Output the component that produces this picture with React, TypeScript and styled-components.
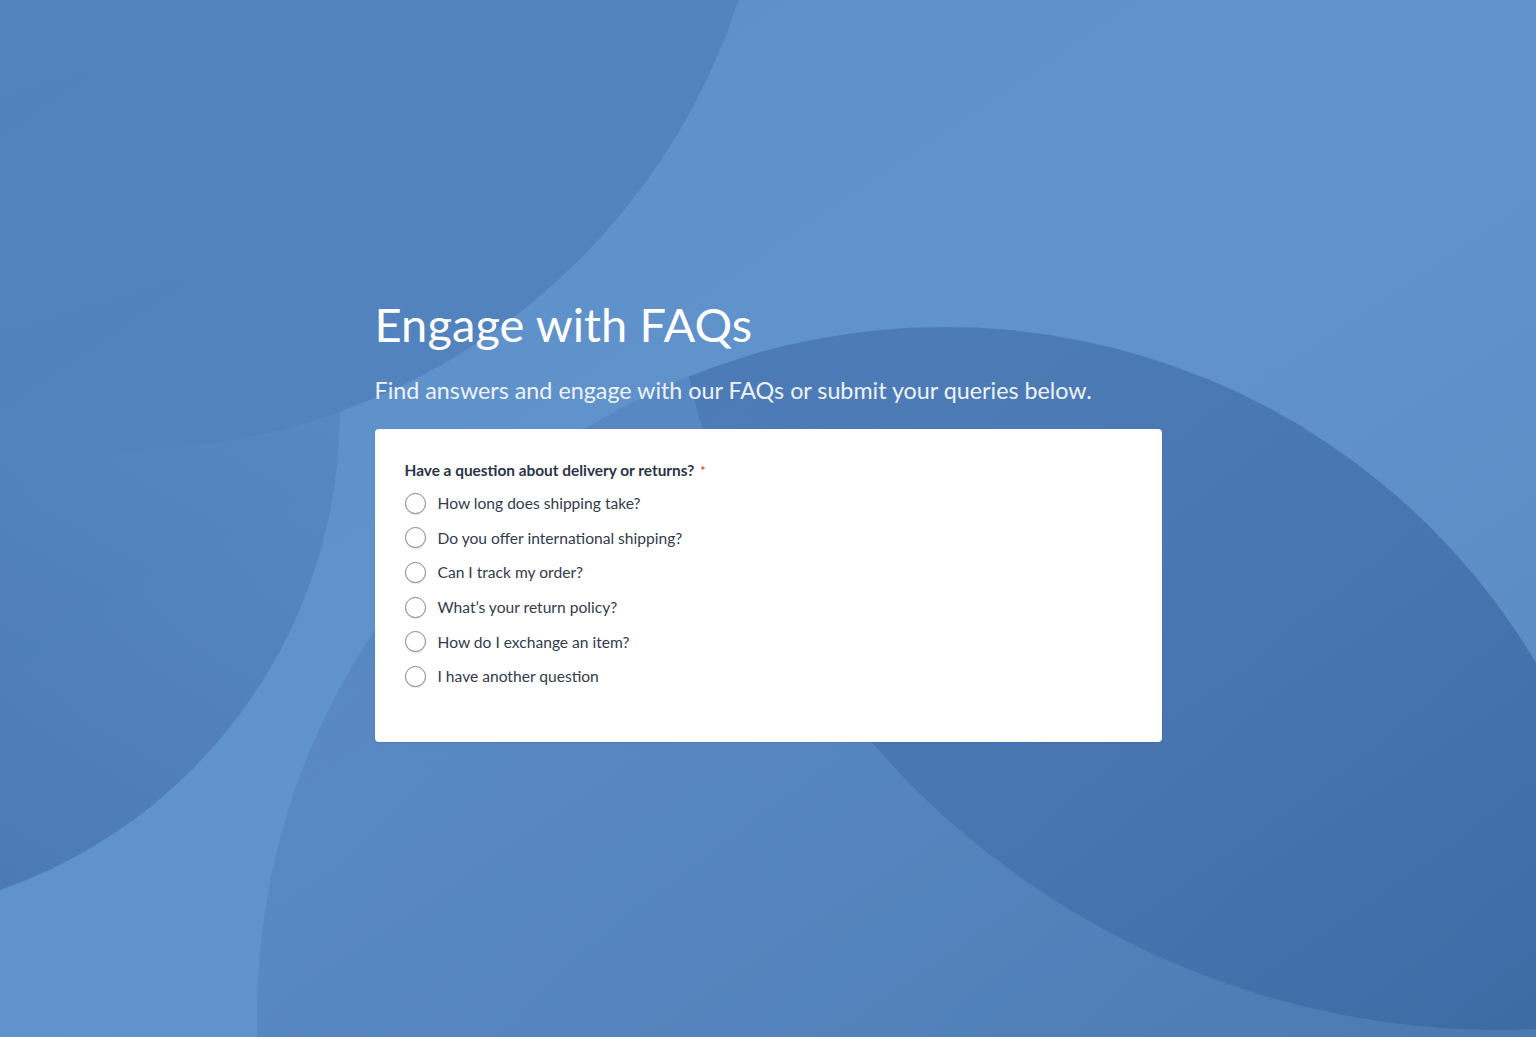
import React from "react";
import styled, { createGlobalStyle } from "styled-components";

const GlobalStyle = createGlobalStyle`
  * {
    box-sizing: border-box;
  }

  html,
  body {
    margin: 0;
    padding: 0;
    height: 100%;
  }

  body {
    font-family: Lato, "Open Sans", "Liberation Sans", sans-serif;
    background-color: #5b8ec9;
    -webkit-font-smoothing: antialiased;
  }
`;

const Page = styled.main`
  position: relative;
  min-height: 100vh;
  display: flex;
  justify-content: center;
  align-items: flex-start;
  padding-top: 296px;
  overflow: hidden;
`;

const Backdrop = styled.svg`
  position: absolute;
  inset: 0;
  width: 100%;
  height: 100%;
  z-index: 0;
`;

const Content = styled.section`
  position: relative;
  z-index: 1;
  width: 787px;
`;

const Title = styled.h1`
  margin: 0 0 23px;
  font-size: 47px;
  font-weight: 400;
  line-height: 56px;
  color: #ffffff;
  letter-spacing: 0.1px;
`;

const Subtitle = styled.p`
  margin: 0 0 24px;
  font-size: 23.3px;
  font-weight: 400;
  line-height: 30px;
  color: #eef3fa;
`;

const Card = styled.form`
  background: #ffffff;
  border-radius: 4px;
  padding: 30px 30px 48px 30px;
  box-shadow: 0 1px 2px rgba(20, 50, 90, 0.12);
`;

const Question = styled.div`
  display: flex;
  align-items: center;
  gap: 6px;
  margin-bottom: 5px;
  font-size: 15.4px;
  font-weight: 700;
  line-height: 22px;
  color: #2c3345;
`;

const Required = styled.span`
  color: #e0463f;
  font-size: 12px;
  font-weight: 700;
  line-height: 1;
  margin-top: 1px;
`;

const Options = styled.div`
  display: flex;
  flex-direction: column;
`;

const Option = styled.label`
  display: flex;
  align-items: center;
  gap: 12px;
  height: 34.6px;
  font-size: 15.6px;
  line-height: 20px;
  color: #343b4c;
  cursor: pointer;
`;

const Radio = styled.span`
  flex: none;
  width: 21px;
  height: 21px;
  border-radius: 50%;
  border: 1.5px solid #80868f;
  background: #ffffff;
  box-shadow: 0 1px 1px rgba(0, 0, 0, 0.12);
`;

const questions = [
  "How long does shipping take?",
  "Do you offer international shipping?",
  "Can I track my order?",
  "What’s your return policy?",
  "How do I exchange an item?",
  "I have another question",
];

const Circles: React.FC = () => (
  <Backdrop viewBox="0 0 1536 1037" preserveAspectRatio="none">
    <defs>
      <linearGradient id="topLeft" x1="0" y1="0" x2="0.3" y2="1">
        <stop offset="0" stopColor="#5487c3" />
        <stop offset="1" stopColor="#4f81bd" />
      </linearGradient>
      <linearGradient id="leftSide" x1="0.7" y1="0.3" x2="0.3" y2="1">
        <stop offset="0" stopColor="#5587c3" />
        <stop offset="1" stopColor="#4371ae" />
      </linearGradient>
      <linearGradient id="bottomRight" x1="0" y1="0" x2="1" y2="1">
        <stop offset="0" stopColor="#5586c2" />
        <stop offset="1" stopColor="#4d7fbb" />
      </linearGradient>
      <linearGradient id="deep" x1="0" y1="0" x2="1" y2="1">
        <stop offset="0" stopColor="#4c7dba" />
        <stop offset="1" stopColor="#3f6dab" />
      </linearGradient>
      <linearGradient id="sheen" x1="0" y1="0" x2="1" y2="1">
        <stop offset="0" stopColor="#ffffff" stopOpacity="0" />
        <stop offset="0.5" stopColor="#ffffff" stopOpacity="0.03" />
        <stop offset="1" stopColor="#000000" stopOpacity="0.06" />
      </linearGradient>
      <clipPath id="bigRight">
        <circle cx="945" cy="1015" r="688" />
      </clipPath>
    </defs>
    <rect width="1536" height="1037" fill="#5c8fca" />
    <circle cx="-166" cy="412" r="506" fill="url(#leftSide)" />
    <circle cx="120" cy="-200" r="650" fill="url(#topLeft)" />
    <circle cx="945" cy="1015" r="688" fill="url(#bottomRight)" />
    <g clipPath="url(#bigRight)">
      <circle cx="1500" cy="200" r="830" fill="url(#deep)" />
    </g>
    <rect width="1536" height="1037" fill="url(#sheen)" />
  </Backdrop>
);

const App: React.FC = () => (
  <>
    <GlobalStyle />
    <Page>
      <Circles />
      <Content>
        <Title>Engage with FAQs</Title>
        <Subtitle>
          Find answers and engage with our FAQs or submit your queries below.
        </Subtitle>
        <Card onSubmit={(e) => e.preventDefault()}>
          <Question>
            Have a question about delivery or returns?
            <Required>*</Required>
          </Question>
          <Options>
            {questions.map((q) => (
              <Option key={q}>
                <Radio />
                {q}
              </Option>
            ))}
          </Options>
        </Card>
      </Content>
    </Page>
  </>
);

export default App;
